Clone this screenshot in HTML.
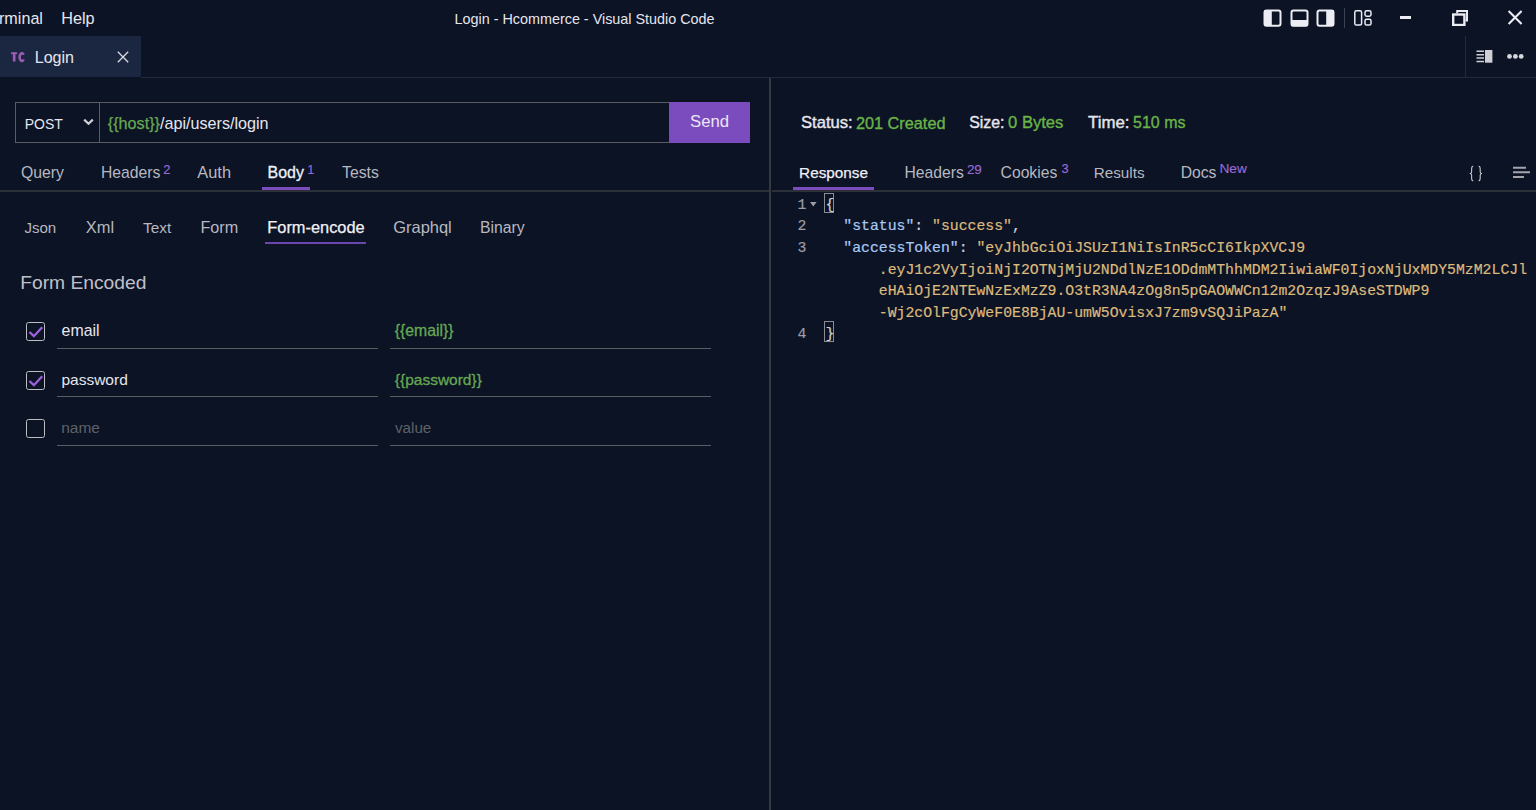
<!DOCTYPE html>
<html><head><meta charset="utf-8">
<style>
*{margin:0;padding:0;box-sizing:border-box}
html,body{width:1536px;height:810px;overflow:hidden;background:#0b1325;font-family:"Liberation Sans",sans-serif}
.a{position:absolute;white-space:nowrap;line-height:1}
svg{display:block}
.code{font-family:"Liberation Mono",monospace;font-size:14.81px;line-height:21.6px;-webkit-text-stroke:0.2px currentColor}
</style></head><body>
<div class="a" style="left:-1.0px;top:10.0px;font-size:16.15px;color:#e6e6ee;font-weight:normal;">rminal</div>
<div class="a" style="left:61.2px;top:10.0px;font-size:16.24px;color:#e6e6ee;font-weight:normal;">Help</div>
<div class="a" style="left:454.6px;top:12.1px;font-size:14.36px;color:#e6e6ee;font-weight:normal;">Login - Hcommerce - Visual Studio Code</div>
<div class="a" style="left:0px;top:36px;width:141px;height:41px;background:#1b2640"></div>
<div class="a" style="left:11px;top:51.5px;width:15px;height:11px"><svg width="15" height="11" viewBox="0 0 15 11"><rect x="0" y="0.3" width="6.2" height="1.9" fill="#9a5cb2"/><rect x="1.8" y="0.3" width="2.7" height="9.2" fill="#9a5cb2"/><path d="M12.7 2.7A2.2 3.95 0 1 0 12.7 7.6" stroke="#9a5cb2" stroke-width="2.5" fill="none"/></svg></div>
<div class="a" style="left:34.7px;top:48.9px;font-size:16.09px;color:#e6e6ee;font-weight:normal;">Login</div>
<div class="a" style="left:117px;top:51px;width:12px;height:12px"><svg width="12" height="12" viewBox="0 0 12 12"><path d="M0.8 0.8L11.2 11.2M11.2 0.8L0.8 11.2" stroke="#dcdce4" stroke-width="1.3"/></svg></div>
<div class="a" style="left:141px;top:77px;width:1395px;height:1px;background:#1f2a3c"></div>
<div class="a" style="left:1465px;top:36px;width:1px;height:41px;background:#1f2a3c"></div>
<div class="a" style="left:1476px;top:50px;width:17px;height:13px"><svg width="17" height="13" viewBox="0 0 17 13"><path d="M0.5 1.2H8M0.5 4.7H8M0.5 8H8M0.5 11.5H8" stroke="#cfcfd4" stroke-width="1.6"/><rect x="9" y="0" width="7.4" height="12.7" fill="#cfcfd4"/></svg></div>
<div class="a" style="left:1506px;top:53px;width:19px;height:7px"><svg width="19" height="7" viewBox="0 0 19 7"><circle cx="3.5" cy="3.4" r="2.4" fill="#d6d6dc"/><circle cx="9.4" cy="3.4" r="2.4" fill="#d6d6dc"/><circle cx="15.2" cy="3.4" r="2.4" fill="#d6d6dc"/></svg></div>
<div class="a" style="left:1263px;top:8.5px;width:19px;height:18px"><svg width="19" height="18" viewBox="0 0 19 18"><rect x="1.5" y="1.4" width="16" height="15.4" rx="2" fill="none" stroke="#ececf4" stroke-width="2"/><rect x="1" y="1" width="7.8" height="16" rx="1" fill="#ececf4"/></svg></div>
<div class="a" style="left:1289.5px;top:8.5px;width:19px;height:18px"><svg width="19" height="18" viewBox="0 0 19 18"><rect x="1.5" y="1.4" width="16" height="15.4" rx="2" fill="none" stroke="#ececf4" stroke-width="2"/><rect x="1" y="11" width="17" height="6.2" rx="1" fill="#ececf4"/></svg></div>
<div class="a" style="left:1315.5px;top:8.5px;width:19px;height:18px"><svg width="19" height="18" viewBox="0 0 19 18"><rect x="1.5" y="1.4" width="16" height="15.4" rx="2" fill="none" stroke="#ececf4" stroke-width="2"/><rect x="10.2" y="1" width="7.8" height="16" rx="1" fill="#ececf4"/></svg></div>
<div class="a" style="left:1344px;top:8px;width:1px;height:20px;background:#3a4252"></div>
<div class="a" style="left:1354px;top:10px;width:18px;height:16px"><svg width="18" height="16" viewBox="0 0 18 16"><rect x="0.8" y="0.8" width="6.8" height="14.2" rx="1.6" fill="none" stroke="#ececf4" stroke-width="1.5"/><rect x="11" y="0.8" width="6" height="5.4" rx="1.6" fill="none" stroke="#ececf4" stroke-width="1.5"/><rect x="11" y="9.3" width="6" height="5.7" rx="1.6" fill="none" stroke="#ececf4" stroke-width="1.5"/></svg></div>
<div class="a" style="left:1399.5px;top:16px;width:11.5px;height:3px;background:#ececf4"></div>
<div class="a" style="left:1452px;top:9px;width:17px;height:17px"><svg width="17" height="17" viewBox="0 0 17 17"><rect x="1.2" y="5.5" width="11.2" height="10.5" fill="none" stroke="#ececf4" stroke-width="2.4"/><path d="M5.2 4.2V1.9H15V11.6H13.6" fill="none" stroke="#ececf4" stroke-width="2"/></svg></div>
<div class="a" style="left:1507px;top:10px;width:16px;height:15px"><svg width="16" height="15" viewBox="0 0 16 15"><path d="M1.6 1.1L14.6 14.1M14.6 1.1L1.6 14.1" stroke="#ececf4" stroke-width="2.1"/></svg></div>
<div class="a" style="left:769px;top:78px;width:2px;height:732px;background:#363940"></div>
<div class="a" style="left:15px;top:102px;width:655px;height:41px;border:1px solid #5a5c62"></div>
<div class="a" style="left:99px;top:102px;width:1px;height:41px;background:#5a5c62"></div>
<div class="a" style="left:24.7px;top:116.6px;font-size:14.01px;color:#e6e6ee;font-weight:normal;">POST</div>
<div class="a" style="left:82.5px;top:118px;width:11px;height:8px"><svg width="11" height="8" viewBox="0 0 11 8"><path d="M1.2 1.6L5.5 5.7L9.8 1.6" stroke="#cfd0d6" stroke-width="2.2" fill="none"/></svg></div>
<div class="a" style="left:107.8px;top:115.2px;font-size:16.17px;color:#e6e6ee;font-weight:normal;"><span style="color:#66a852;-webkit-text-stroke:0.25px #66a852">{{host}}</span>/api/users/login</div>
<div class="a" style="left:669px;top:102px;width:81px;height:41px;background:#7a4cbe"></div>
<div class="a" style="left:690.1px;top:113.5px;font-size:16.67px;color:#ece6f4;font-weight:normal;">Send</div>
<div class="a" style="left:20.9px;top:165.0px;font-size:15.77px;color:#b8b8c0;font-weight:normal;">Query</div>
<div class="a" style="left:101.0px;top:165.1px;font-size:15.72px;color:#b8b8c0;font-weight:normal;">Headers</div>
<div class="a" style="left:163.3px;top:163.2px;font-size:13.0px;color:#9a6ad6;font-weight:normal;-webkit-text-stroke:0.15px #9a6ad6">2</div>
<div class="a" style="left:197.3px;top:164.3px;font-size:16.4px;color:#b8b8c0;font-weight:normal;">Auth</div>
<div class="a" style="left:267.6px;top:165.0px;font-size:15.95px;color:#f0f0f6;font-weight:normal;-webkit-text-stroke:0.3px #f0f0f6">Body</div>
<div class="a" style="left:307.2px;top:164.0px;font-size:12.5px;color:#9a6ad6;font-weight:normal;-webkit-text-stroke:0.15px #9a6ad6">1</div>
<div class="a" style="left:342px;top:165.0px;font-size:15.8px;color:#b8b8c0;font-weight:normal;">Tests</div>
<div class="a" style="left:262px;top:187px;width:48px;height:3px;background:#7a4cbe"></div>
<div class="a" style="left:0px;top:190px;width:769px;height:2px;background:#2c3038"></div>
<div class="a" style="left:24.4px;top:219.9px;font-size:15.07px;color:#b8b8c0;font-weight:normal;">Json</div>
<div class="a" style="left:85.8px;top:218.8px;font-size:16.46px;color:#b8b8c0;font-weight:normal;">Xml</div>
<div class="a" style="left:143.1px;top:219.7px;font-size:15.39px;color:#b8b8c0;font-weight:normal;">Text</div>
<div class="a" style="left:200.4px;top:219.0px;font-size:16.21px;color:#b8b8c0;font-weight:normal;">Form</div>
<div class="a" style="left:267.3px;top:218.8px;font-size:16.39px;color:#f0f0f6;font-weight:normal;-webkit-text-stroke:0.25px #f0f0f6">Form-encode</div>
<div class="a" style="left:393.2px;top:218.7px;font-size:16.48px;color:#b8b8c0;font-weight:normal;">Graphql</div>
<div class="a" style="left:480.0px;top:220.1px;font-size:15.78px;color:#b8b8c0;font-weight:normal;">Binary</div>
<div class="a" style="left:265px;top:242px;width:101px;height:2px;background:#6a46ae"></div>
<div class="a" style="left:20.2px;top:273.0px;font-size:19.24px;color:#c0c0ca;font-weight:normal;">Form Encoded</div>
<div class="a" style="left:26px;top:322px;width:19px;height:19px;border:1.3px solid #bdbdc4;border-radius:2.5px"><svg width="19" height="19" viewBox="0 0 19 19" style="position:absolute;left:-1px;top:-1px"><path d="M3.4 10L7.9 14.2L16.2 5.2" stroke="#9d62de" stroke-width="2.3" fill="none"/></svg></div>
<div class="a" style="left:61.6px;top:322.6px;font-size:15.92px;color:#e6e6ee;font-weight:normal;">email</div>
<div class="a" style="left:394.8px;top:322.8px;font-size:15.76px;color:#66a852;font-weight:normal;-webkit-text-stroke:0.3px #66a852">{{email}}</div>
<div class="a" style="left:57px;top:348px;width:321px;height:1px;background:#5a5c62"></div>
<div class="a" style="left:390px;top:348px;width:321px;height:1px;background:#5a5c62"></div>
<div class="a" style="left:26px;top:371px;width:19px;height:19px;border:1.3px solid #bdbdc4;border-radius:2.5px"><svg width="19" height="19" viewBox="0 0 19 19" style="position:absolute;left:-1px;top:-1px"><path d="M3.4 10L7.9 14.2L16.2 5.2" stroke="#9d62de" stroke-width="2.3" fill="none"/></svg></div>
<div class="a" style="left:61.4px;top:371.9px;font-size:15.52px;color:#e6e6ee;font-weight:normal;">password</div>
<div class="a" style="left:394.8px;top:371.9px;font-size:15.51px;color:#66a852;font-weight:normal;-webkit-text-stroke:0.3px #66a852">{{password}}</div>
<div class="a" style="left:57px;top:396px;width:321px;height:1px;background:#5a5c62"></div>
<div class="a" style="left:390px;top:396px;width:321px;height:1px;background:#5a5c62"></div>
<div class="a" style="left:26px;top:419px;width:19px;height:19px;border:1.3px solid #bdbdc4;border-radius:2.5px"></div>
<div class="a" style="left:61.2px;top:419.6px;font-size:15.48px;color:#5e6168;font-weight:normal;">name</div>
<div class="a" style="left:395.0px;top:419.8px;font-size:15.19px;color:#5e6168;font-weight:normal;">value</div>
<div class="a" style="left:57px;top:445px;width:321px;height:1px;background:#5a5c62"></div>
<div class="a" style="left:390px;top:445px;width:321px;height:1px;background:#5a5c62"></div>
<div class="a" style="left:801.0px;top:114.7px;font-size:16.6px;color:#e6e6ee;font-weight:normal;-webkit-text-stroke:0.4px #e6e6ee">Status:</div>
<div class="a" style="left:855.9px;top:115.0px;font-size:16.29px;color:#6ab348;font-weight:normal;-webkit-text-stroke:0.35px #6ab348">201 Created</div>
<div class="a" style="left:969.2px;top:115.3px;font-size:15.9px;color:#e6e6ee;font-weight:normal;-webkit-text-stroke:0.4px #e6e6ee">Size:</div>
<div class="a" style="left:1008.1px;top:114.7px;font-size:16.58px;color:#6ab348;font-weight:normal;-webkit-text-stroke:0.35px #6ab348">0 Bytes</div>
<div class="a" style="left:1088.1px;top:114.5px;font-size:16.8px;color:#e6e6ee;font-weight:normal;-webkit-text-stroke:0.4px #e6e6ee">Time:</div>
<div class="a" style="left:1133.1px;top:115.2px;font-size:15.97px;color:#6ab348;font-weight:normal;-webkit-text-stroke:0.35px #6ab348">510 ms</div>
<div class="a" style="left:799.1px;top:164.9px;font-size:15.32px;color:#f0f0f6;font-weight:normal;-webkit-text-stroke:0.25px #f0f0f6">Response</div>
<div class="a" style="left:904.5px;top:164.6px;font-size:15.69px;color:#b8b8c0;font-weight:normal;">Headers</div>
<div class="a" style="left:966.9px;top:162.6px;font-size:13.4px;color:#9a6ad6;font-weight:normal;-webkit-text-stroke:0.15px #9a6ad6">29</div>
<div class="a" style="left:1000.6px;top:164.6px;font-size:15.69px;color:#b8b8c0;font-weight:normal;">Cookies</div>
<div class="a" style="left:1061.5px;top:163.0px;font-size:12.8px;color:#9a6ad6;font-weight:normal;-webkit-text-stroke:0.15px #9a6ad6">3</div>
<div class="a" style="left:1093.7px;top:165.0px;font-size:15.25px;color:#b8b8c0;font-weight:normal;">Results</div>
<div class="a" style="left:1180.7px;top:164.6px;font-size:15.69px;color:#b8b8c0;font-weight:normal;">Docs</div>
<div class="a" style="left:1219.4px;top:162.0px;font-size:13.7px;color:#9a6ad6;font-weight:normal;-webkit-text-stroke:0.15px #9a6ad6">New</div>
<div class="a" style="left:1468px;top:165px;width:16px;height:17px"><svg width="16" height="17" viewBox="0 0 16 17"><path d="M5.2 1.2C3.6 1.2 3.6 2 3.6 4V7C3.6 8 3 8.5 1.8 8.5C3 8.5 3.6 9 3.6 10V13C3.6 15 3.6 15.8 5.2 15.8" stroke="#c8c8ce" stroke-width="1.1" fill="none"/><path d="M10.6 1.2C12.2 1.2 12.2 2 12.2 4V7C12.2 8 12.8 8.5 14 8.5C12.8 8.5 12.2 9 12.2 10V13C12.2 15 12.2 15.8 10.6 15.8" stroke="#c8c8ce" stroke-width="1.1" fill="none"/></svg></div>
<div class="a" style="left:1513px;top:166px;width:18px;height:13px"><svg width="18" height="13" viewBox="0 0 18 13"><path d="M0 1.7H13M0 6.3H17M0 11.1H11" stroke="#a4a4aa" stroke-width="2"/></svg></div>
<div class="a" style="left:793px;top:187px;width:81px;height:3px;background:#7a4cbe"></div>
<div class="a" style="left:772px;top:190px;width:764px;height:2px;background:#2c3038"></div>
<div class="a code" style="left:797.5px;top:194.70px;color:#9c9ca2">1</div>
<div class="a code" style="left:797.5px;top:216.30px;color:#9c9ca2">2</div>
<div class="a code" style="left:797.5px;top:237.90px;color:#9c9ca2">3</div>
<div class="a code" style="left:797.5px;top:324.30px;color:#9c9ca2">4</div>
<div class="a" style="left:810px;top:202px;width:7px;height:5px"><svg width="7" height="5" viewBox="0 0 7 5"><path d="M0 0H6.6L3.3 4.6Z" fill="#9c9ca2"/></svg></div>
<div class="a" style="left:824px;top:193px;width:10px;height:20px;border:1px solid #8c8c90"></div>
<div class="a" style="left:824px;top:321px;width:10px;height:21px;border:1px solid #8c8c90"></div>
<div class="a code" style="left:825.50px;top:194.70px"><span style="color:#d0d0d4">{</span></div>
<div class="a code" style="left:843.27px;top:216.30px"><span style="color:#a9c9f2">"status"</span><span style="color:#d0d0d4">: </span><span style="color:#dcb97c">"success"</span><span style="color:#d0d0d4">,</span></div>
<div class="a code" style="left:843.27px;top:237.90px"><span style="color:#a9c9f2">"accessToken"</span><span style="color:#d0d0d4">: </span><span style="color:#dcb97c">"eyJhbGciOiJSUzI1NiIsInR5cCI6IkpXVCJ9</span></div>
<div class="a code" style="left:878.82px;top:259.50px"><span style="color:#dcb97c">.eyJ1c2VyIjoiNjI2OTNjMjU2NDdlNzE1ODdmMThhMDM2IiwiaWF0IjoxNjUxMDY5MzM2LCJl</span></div>
<div class="a code" style="left:878.82px;top:281.10px"><span style="color:#dcb97c">eHAiOjE2NTEwNzExMzZ9.O3tR3NA4zOg8n5pGAOWWCn12m2OzqzJ9AseSTDWP9</span></div>
<div class="a code" style="left:878.82px;top:302.70px"><span style="color:#dcb97c">-Wj2cOlFgCyWeF0E8BjAU-umW5OvisxJ7zm9vSQJiPazA"</span></div>
<div class="a code" style="left:825.50px;top:324.30px"><span style="color:#d0d0d4">}</span></div>
</body></html>
